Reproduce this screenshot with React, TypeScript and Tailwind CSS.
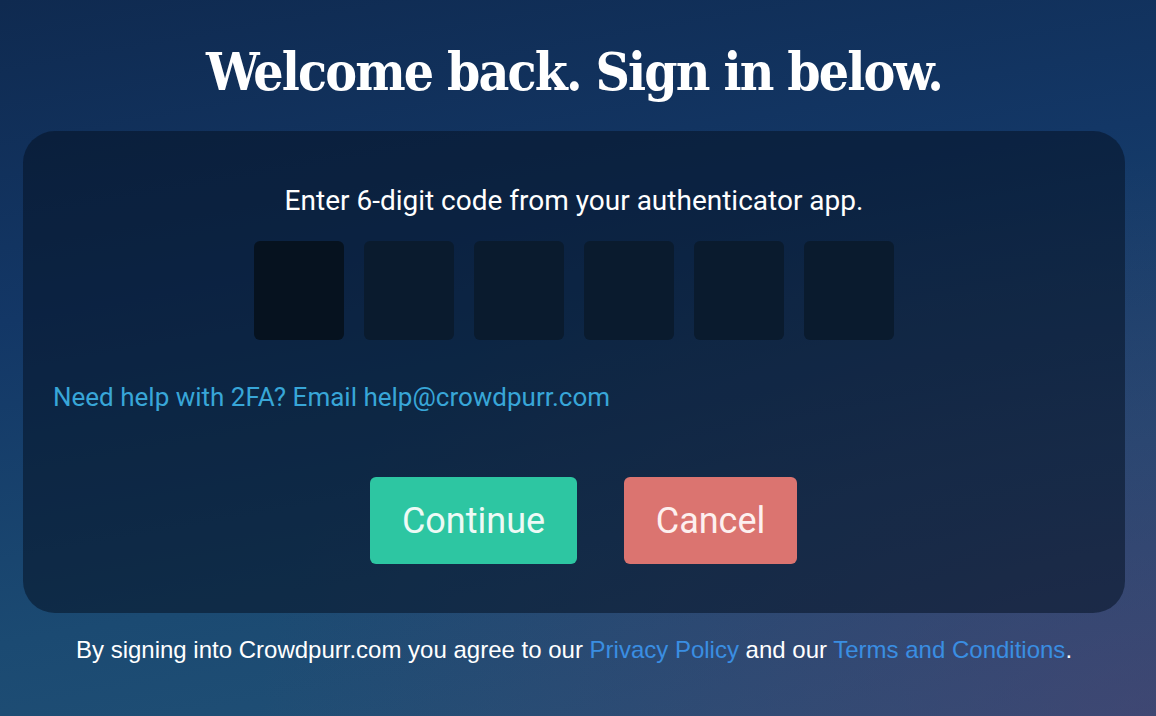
export default function App() {
  const boxes = [0, 1, 2, 3, 4, 5]
  return (
    <div className="relative h-[716px] w-[1156px] overflow-hidden bg-[linear-gradient(170deg,#0f2a50_0%,#133766_35%,#1b4a72_70%,#235277_100%)] font-['Roboto',sans-serif]">
      <div className="pointer-events-none absolute inset-0 bg-[radial-gradient(ellipse_at_100%_100%,rgba(90,60,110,0.5)_0%,rgba(90,60,110,0)_55%)]" />
      <div className="relative flex flex-col items-center pt-[36px] pr-[8px]">
        <h1 className="text-[53px] leading-[70px] font-bold text-white font-['DejaVu_Serif_Condensed','DejaVu_Serif',serif] tracking-[-1.85px]">
          Welcome back. Sign in below.
        </h1>
        <div className="mt-[25px] flex h-[482px] w-[1102px] flex-col rounded-[32px] bg-[rgba(6,18,36,0.55)] px-[30px]">
          <p className="mt-[52px] text-center text-[28px] leading-[36px] text-white">
            Enter 6-digit code from your authenticator app.
          </p>
          <div className="mt-[22px] flex justify-center gap-[20px]">
            {boxes.map((i) => (
              <div
                key={i}
                className={i === 0 ? 'h-[99px] w-[90px] rounded-[6px] bg-[#06121f]' : 'h-[99px] w-[90px] rounded-[6px] bg-[#0a1b2e]'}
              />
            ))}
          </div>
          <p className="mt-[40px] text-[26px] leading-[34px] text-[#38a6d8]">
            Need help with 2FA? Email help@crowdpurr.com
          </p>
          <div className="mt-[63px] flex justify-center gap-[47px] pl-[19px]">
            <button className="h-[87px] w-[207px] rounded-[6px] bg-[#2dc6a2] text-[36px] text-[#eefaf6]">Continue</button>
            <button className="h-[87px] w-[173px] rounded-[6px] bg-[#db7470] text-[36px] text-[#fdf0ef]">Cancel</button>
          </div>
        </div>
        <p className="mt-[21px] text-[24px] leading-[32px] text-white font-['Liberation_Sans',sans-serif]">
          By signing into Crowdpurr.com you agree to our <span className="text-[#3a8ee2]">Privacy Policy</span> and our{' '}
          <span className="text-[#3a8ee2]">Terms and Conditions</span>.
        </p>
      </div>
    </div>
  )
}
